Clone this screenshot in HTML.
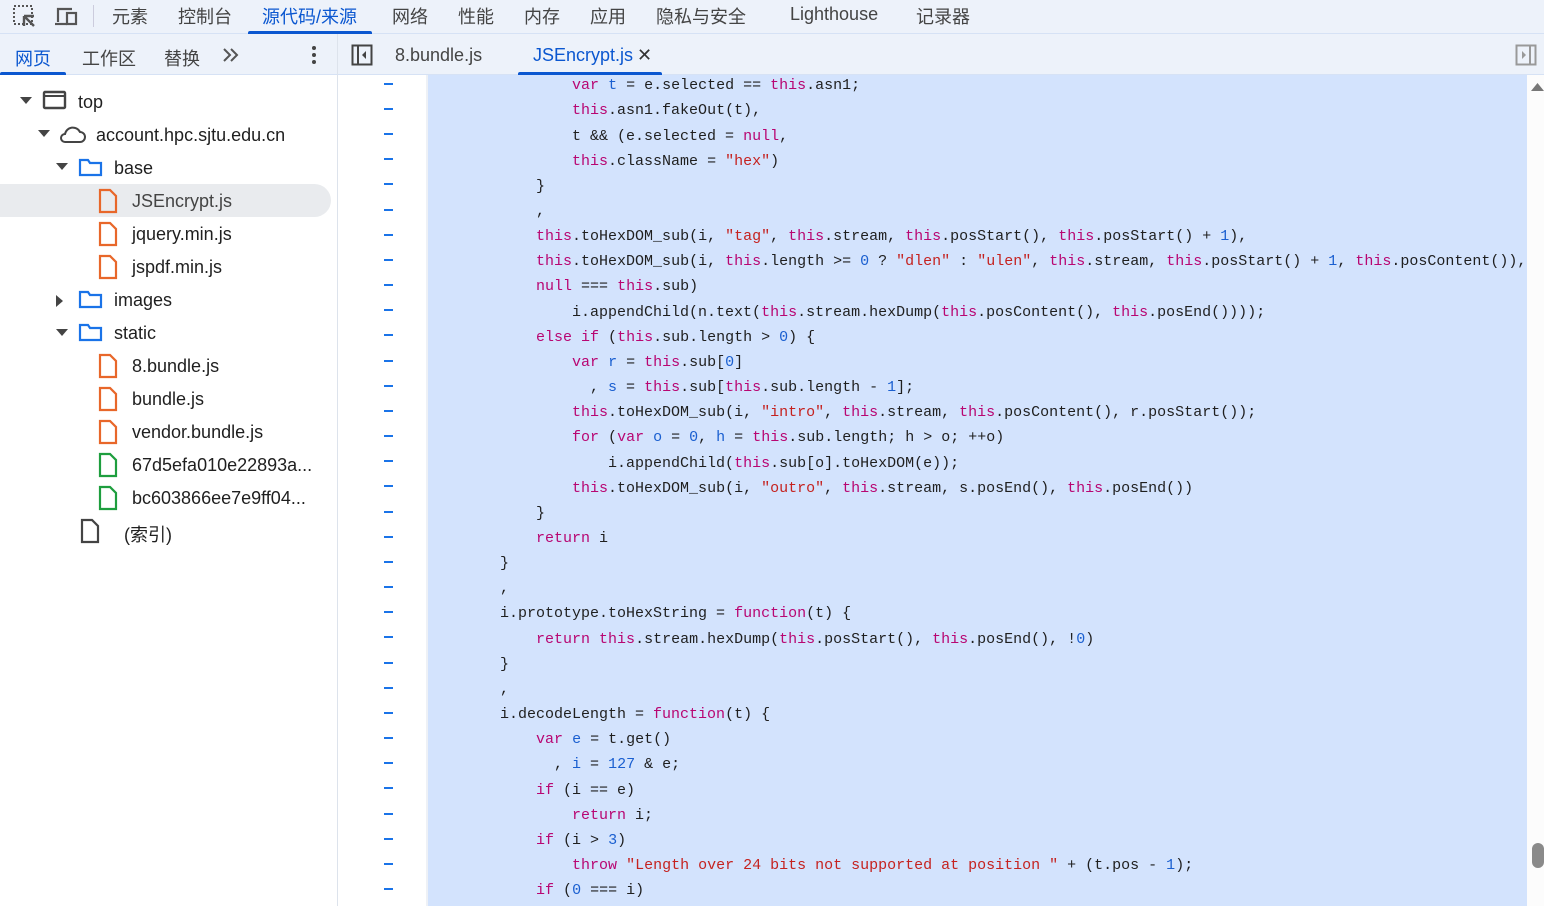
<!DOCTYPE html>
<html><head><meta charset="utf-8"><style>
*{margin:0;padding:0;box-sizing:border-box}
body{width:1544px;height:906px;overflow:hidden;background:#fff;font-family:"Liberation Sans","Noto Sans CJK SC",sans-serif;position:relative;color:#1f1f1f}
.a{position:absolute;white-space:nowrap}
.t1{font-size:18px;color:#444;top:3px}
.t2{font-size:18px;color:#444;top:45px}
.code{position:absolute;left:428px;top:75px;width:1099px;height:831px;background:#d3e3fd;overflow:hidden}
.code pre{position:absolute;left:0;top:-1.8px;font-family:"Liberation Mono",monospace;font-size:15px;line-height:25.15px;color:#1f1f1f}
.k{color:#b80672}.s{color:#c5221f}.n{color:#1a5fd0}
.tree .a{font-size:18px;color:#1f1f1f}
.tree div.a{margin-top:2px}
</style></head><body>
<div class="a" style="left:0;top:0;width:1544px;height:34px;background:#edf2fa;border-bottom:1px solid #d6e2f5"></div>
<div class="a" style="left:0;top:34px;width:1544px;height:41px;background:#edf2fa;border-bottom:1px solid #d6e2f5"></div>
<svg class="a" style="left:12px;top:4px" width="26" height="26" viewBox="0 0 26 26"><rect x="2" y="2" width="18" height="18" fill="none" stroke="#555" stroke-width="2" stroke-dasharray="2 2"/><path d="M12 12 L12 22 M12 12 L22 12 M12 12 L22 22" stroke="#555" stroke-width="2.4" fill="none"/></svg>
<svg class="a" style="left:54px;top:4px" width="26" height="26" viewBox="0 0 26 26"><path d="M4 18V5h14" stroke="#555" stroke-width="2.2" fill="none"/><rect x="13" y="9" width="9" height="11" fill="none" stroke="#555" stroke-width="2.2"/><path d="M1 20h12" stroke="#555" stroke-width="2.2"/></svg>
<div class="a" style="left:93px;top:5px;width:1px;height:22px;background:#ccd"></div>
<div class="a t1" style="left:112px">元素</div>
<div class="a t1" style="left:178px">控制台</div>
<div class="a t1" style="left:262px;color:#0b57d0">源代码/来源</div>
<div class="a" style="left:248px;top:31px;width:124px;height:3px;background:#0b57d0;border-radius:2px 2px 0 0"></div>
<div class="a t1" style="left:392px">网络</div>
<div class="a t1" style="left:458px">性能</div>
<div class="a t1" style="left:524px">内存</div>
<div class="a t1" style="left:590px">应用</div>
<div class="a t1" style="left:656px">隐私与安全</div>
<div class="a t1" style="left:790px;top:4px">Lighthouse</div>
<div class="a t1" style="left:916px">记录器</div>

<div class="a t2" style="left:15px;color:#0b57d0">网页</div>
<div class="a" style="left:0;top:72px;width:66px;height:3px;background:#0b57d0;border-radius:2px 2px 0 0"></div>
<div class="a t2" style="left:82px">工作区</div>
<div class="a t2" style="left:164px">替换</div>
<svg class="a" style="left:221px;top:46px" width="20" height="18" viewBox="0 0 20 18"><path d="M3 3l6 6-6 6M10 3l6 6-6 6" stroke="#555" stroke-width="2" fill="none"/></svg>
<svg class="a" style="left:310px;top:45px" width="8" height="20"><circle cx="4" cy="3" r="2" fill="#444"/><circle cx="4" cy="10" r="2" fill="#444"/><circle cx="4" cy="17" r="2" fill="#444"/></svg>
<div class="a" style="left:337px;top:34px;width:1px;height:872px;background:#dde3ec"></div>
<svg class="a" style="left:351px;top:44px" width="22" height="22" viewBox="0 0 22 22"><rect x="1.5" y="1.5" width="19" height="19" fill="none" stroke="#444" stroke-width="2"/><path d="M7 2v18" stroke="#444" stroke-width="2"/><path d="M15 7l-4 4 4 4z" fill="#444"/></svg>
<div class="a t2" style="left:395px">8.bundle.js</div>
<div class="a t2" style="left:533px;color:#0b57d0">JSEncrypt.js</div>
<div class="a t2" style="left:637px;color:#333">✕</div>
<div class="a" style="left:518px;top:72px;width:144px;height:3px;background:#0b57d0;border-radius:2px 2px 0 0"></div>
<svg class="a" style="left:1515px;top:44px" width="22" height="22" viewBox="0 0 22 22"><rect x="1.5" y="1.5" width="19" height="19" fill="none" stroke="#999" stroke-width="2"/><path d="M15 2v18" stroke="#999" stroke-width="2"/><path d="M7 7l4 4-4 4z" fill="#999"/></svg>

<div class="tree">
<div class="a" style="left:0;top:182px;width:331px;height:33px;background:#e9ebee;border-radius:0 17px 17px 0"></div>
<svg class="a" style="left:20px;top:97px" width="12" height="8"><path d="M0 0h12L6 7z" fill="#444"/></svg>
<svg class="a" style="left:42px;top:90px" width="26" height="22"><rect x="2" y="2" width="21" height="16" rx="1" fill="none" stroke="#444" stroke-width="2.4"/><path d="M2 6h21" stroke="#444" stroke-width="2"/></svg>
<div class="a" style="left:78px;top:90px">top</div>
<svg class="a" style="left:38px;top:130px" width="12" height="8"><path d="M0 0h12L6 7z" fill="#444"/></svg>
<svg class="a" style="left:58px;top:123px" width="28" height="22"><path d="M7 19h15a5 5 0 0 0 0-10 8 8 0 0 0-15 2 4 4 0 0 0 0 8z" fill="none" stroke="#444" stroke-width="2"/></svg>
<div class="a" style="left:96px;top:123px">account.hpc.sjtu.edu.cn</div>
<svg class="a" style="left:56px;top:163px" width="12" height="8"><path d="M0 0h12L6 7z" fill="#444"/></svg>
<svg class="a" style="left:78px;top:157px" width="26" height="20"><path d="M2 3h8l2 3h11v12H2z" fill="none" stroke="#1a73e8" stroke-width="2.2"/></svg>
<div class="a" style="left:114px;top:156px">base</div>
<svg class="a" style="left:56px;top:295px" width="8" height="12"><path d="M0 0v12l7-6z" fill="#444"/></svg>
<svg class="a" style="left:78px;top:289px" width="26" height="20"><path d="M2 3h8l2 3h11v12H2z" fill="none" stroke="#1a73e8" stroke-width="2.2"/></svg>
<div class="a" style="left:114px;top:288px">images</div>
<svg class="a" style="left:56px;top:329px" width="12" height="8"><path d="M0 0h12L6 7z" fill="#444"/></svg>
<svg class="a" style="left:78px;top:322px" width="26" height="20"><path d="M2 3h8l2 3h11v12H2z" fill="none" stroke="#1a73e8" stroke-width="2.2"/></svg>
<div class="a" style="left:114px;top:321px">static</div>

<svg class="a" style="left:98px;top:188px" width="20" height="26"><path d="M2 2h10l6 6v16H2z" fill="none" stroke="#e8672a" stroke-width="2.2"/></svg>
<div class="a" style="left:132px;top:189px;color:#444">JSEncrypt.js</div>
<svg class="a" style="left:98px;top:221px" width="20" height="26"><path d="M2 2h10l6 6v16H2z" fill="none" stroke="#e8672a" stroke-width="2.2"/></svg>
<div class="a" style="left:132px;top:222px">jquery.min.js</div>
<svg class="a" style="left:98px;top:254px" width="20" height="26"><path d="M2 2h10l6 6v16H2z" fill="none" stroke="#e8672a" stroke-width="2.2"/></svg>
<div class="a" style="left:132px;top:255px">jspdf.min.js</div>
<svg class="a" style="left:98px;top:353px" width="20" height="26"><path d="M2 2h10l6 6v16H2z" fill="none" stroke="#e8672a" stroke-width="2.2"/></svg>
<div class="a" style="left:132px;top:354px">8.bundle.js</div>
<svg class="a" style="left:98px;top:386px" width="20" height="26"><path d="M2 2h10l6 6v16H2z" fill="none" stroke="#e8672a" stroke-width="2.2"/></svg>
<div class="a" style="left:132px;top:387px">bundle.js</div>
<svg class="a" style="left:98px;top:419px" width="20" height="26"><path d="M2 2h10l6 6v16H2z" fill="none" stroke="#e8672a" stroke-width="2.2"/></svg>
<div class="a" style="left:132px;top:420px">vendor.bundle.js</div>
<svg class="a" style="left:98px;top:452px" width="20" height="26"><path d="M2 2h10l6 6v16H2z" fill="none" stroke="#1e9e3e" stroke-width="2.2"/></svg>
<div class="a" style="left:132px;top:453px">67d5efa010e22893a...</div>
<svg class="a" style="left:98px;top:485px" width="20" height="26"><path d="M2 2h10l6 6v16H2z" fill="none" stroke="#1e9e3e" stroke-width="2.2"/></svg>
<div class="a" style="left:132px;top:486px">bc603866ee7e9ff04...</div>
<svg class="a" style="left:80px;top:518px" width="20" height="26"><path d="M2 2h10l6 6v16H2z" fill="none" stroke="#444" stroke-width="2.2"/></svg>
<div class="a" style="left:124px;top:519px">(索引)</div>
</div>

<div class="a" style="left:338px;top:75px;width:90px;height:831px;background:#fff;border-right:2px solid #eef1f6"></div>
<svg class="a" style="left:384px;top:75px" width="10" height="831">
<g fill="#1a73e8">
<rect x="0" y="8" width="9" height="2"/><rect x="0" y="33" width="9" height="2"/><rect x="0" y="58" width="9" height="2"/><rect x="0" y="83" width="9" height="2"/><rect x="0" y="108" width="9" height="2"/><rect x="0" y="134" width="9" height="2"/><rect x="0" y="159" width="9" height="2"/><rect x="0" y="184" width="9" height="2"/><rect x="0" y="209" width="9" height="2"/><rect x="0" y="234" width="9" height="2"/><rect x="0" y="259" width="9" height="2"/><rect x="0" y="285" width="9" height="2"/><rect x="0" y="310" width="9" height="2"/><rect x="0" y="335" width="9" height="2"/><rect x="0" y="360" width="9" height="2"/><rect x="0" y="385" width="9" height="2"/><rect x="0" y="410" width="9" height="2"/><rect x="0" y="436" width="9" height="2"/><rect x="0" y="461" width="9" height="2"/><rect x="0" y="486" width="9" height="2"/><rect x="0" y="511" width="9" height="2"/><rect x="0" y="536" width="9" height="2"/><rect x="0" y="561" width="9" height="2"/><rect x="0" y="587" width="9" height="2"/><rect x="0" y="612" width="9" height="2"/><rect x="0" y="637" width="9" height="2"/><rect x="0" y="662" width="9" height="2"/><rect x="0" y="687" width="9" height="2"/><rect x="0" y="712" width="9" height="2"/><rect x="0" y="738" width="9" height="2"/><rect x="0" y="763" width="9" height="2"/><rect x="0" y="788" width="9" height="2"/><rect x="0" y="813" width="9" height="2"/>
</g></svg>

<div class="code"><pre>                <span class="k">var</span> <span class="n">t</span> = e.selected == <span class="k">this</span>.asn1;
                <span class="k">this</span>.asn1.fakeOut(t),
                t &amp;&amp; (e.selected = <span class="k">null</span>,
                <span class="k">this</span>.className = <span class="s">"hex"</span>)
            }
            ,
            <span class="k">this</span>.toHexDOM_sub(i, <span class="s">"tag"</span>, <span class="k">this</span>.stream, <span class="k">this</span>.posStart(), <span class="k">this</span>.posStart() + <span class="n">1</span>),
            <span class="k">this</span>.toHexDOM_sub(i, <span class="k">this</span>.length &gt;= <span class="n">0</span> ? <span class="s">"dlen"</span> : <span class="s">"ulen"</span>, <span class="k">this</span>.stream, <span class="k">this</span>.posStart() + <span class="n">1</span>, <span class="k">this</span>.posContent()),
            <span class="k">null</span> === <span class="k">this</span>.sub)
                i.appendChild(n.text(<span class="k">this</span>.stream.hexDump(<span class="k">this</span>.posContent(), <span class="k">this</span>.posEnd())));
            <span class="k">else if</span> (<span class="k">this</span>.sub.length &gt; <span class="n">0</span>) {
                <span class="k">var</span> <span class="n">r</span> = <span class="k">this</span>.sub[<span class="n">0</span>]
                  , <span class="n">s</span> = <span class="k">this</span>.sub[<span class="k">this</span>.sub.length - <span class="n">1</span>];
                <span class="k">this</span>.toHexDOM_sub(i, <span class="s">"intro"</span>, <span class="k">this</span>.stream, <span class="k">this</span>.posContent(), r.posStart());
                <span class="k">for</span> (<span class="k">var</span> <span class="n">o</span> = <span class="n">0</span>, <span class="n">h</span> = <span class="k">this</span>.sub.length; h &gt; o; ++o)
                    i.appendChild(<span class="k">this</span>.sub[o].toHexDOM(e));
                <span class="k">this</span>.toHexDOM_sub(i, <span class="s">"outro"</span>, <span class="k">this</span>.stream, s.posEnd(), <span class="k">this</span>.posEnd())
            }
            <span class="k">return</span> i
        }
        ,
        i.prototype.toHexString = <span class="k">function</span>(t) {
            <span class="k">return this</span>.stream.hexDump(<span class="k">this</span>.posStart(), <span class="k">this</span>.posEnd(), !<span class="n">0</span>)
        }
        ,
        i.decodeLength = <span class="k">function</span>(t) {
            <span class="k">var</span> <span class="n">e</span> = t.get()
              , <span class="n">i</span> = <span class="n">127</span> &amp; e;
            <span class="k">if</span> (i == e)
                <span class="k">return</span> i;
            <span class="k">if</span> (i &gt; <span class="n">3</span>)
                <span class="k">throw</span> <span class="s">"Length over 24 bits not supported at position "</span> + (t.pos - <span class="n">1</span>);
            <span class="k">if</span> (<span class="n">0</span> === i)
</pre></div>
<div class="a" style="left:1527px;top:75px;width:17px;height:831px;background:#fcfcfc"></div>
<svg class="a" style="left:1531px;top:82px" width="13" height="10"><path d="M0 9L6.5 1 13 9z" fill="#777"/></svg>
<div class="a" style="left:1532px;top:843px;width:12px;height:25px;background:#8a8a8a;border-radius:6px"></div>
</body></html>
